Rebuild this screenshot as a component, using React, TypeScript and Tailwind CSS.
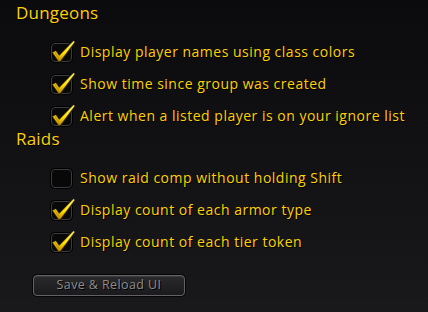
import React from "react";

const font = { fontFamily: '"Open Sans", "Noto Sans", sans-serif' };

function Check() {
  return (
    <svg
      className="absolute left-[-2px] top-[-5px] pointer-events-none"
      width="28"
      height="26"
      viewBox="-2 -5 28 26"
    >
      <defs>
        <linearGradient id="cg" x1="0" y1="0" x2="0" y2="1">
          <stop offset="0" stopColor="#fffa70" />
          <stop offset="0.6" stopColor="#ffe000" />
          <stop offset="1" stopColor="#b88400" />
        </linearGradient>
      </defs>
      <polygon
        points="0.5,8.6 3.8,6.8 7.2,11.6 21.6,-3.2 22.8,-2 8.2,17.4 6.6,17.4"
        fill="#1e1400"
        transform="translate(0.7,0.9)"
      />
      <polygon
        points="0.5,8.6 3.8,6.8 7.2,11.6 21.6,-3.2 22.8,-2 8.2,17.4 6.6,17.4"
        fill="url(#cg)"
        stroke="#3d2b00"
        strokeWidth="0.5"
      />
      <polygon points="1.8,8.7 3.6,7.8 7.2,13 6.9,15.4" fill="#c48c00" opacity="0.75" />
    </svg>
  );
}

function Row({ label, checked }: { label: string; checked: boolean }) {
  return (
    <div className="flex h-[26px] items-center">
      <div className="relative h-[19px] w-[21px] shrink-0 rounded-[4px] border border-[#3c3c3e] bg-[#080809] shadow-[0_0_0_1px_#000]">
        {checked && <Check />}
      </div>
      <span
        className="ml-[8px] whitespace-nowrap text-[14px] leading-[26px] tracking-[0.5px] text-[#ffd100] [text-shadow:1px_1px_0_#000]"
        style={font}
      >
        {label}
      </span>
    </div>
  );
}

function Heading({ children }: { children: React.ReactNode }) {
  return (
    <div
      className="h-[20px] pl-[16px] text-[17px] leading-[20px] tracking-[0.2px] text-[#ffd100] [text-shadow:1px_1px_0_#000]"
      style={font}
    >
      {children}
    </div>
  );
}

export default function App() {
  return (
    <div className="h-[312px] w-[428px] overflow-hidden bg-gradient-to-b from-[#0b0b0d] to-[#19191b] pt-[3px]">
      <Heading>Dungeons</Heading>
      <div className="mt-[16px] flex flex-col gap-[6px] pl-[51px]">
        <Row checked label="Display player names using class colors" />
        <Row checked label="Show time since group was created" />
        <Row checked label="Alert when a listed player is on your ignore list" />
      </div>
      <Heading>Raids</Heading>
      <div className="mt-[16px] flex flex-col gap-[6px] pl-[51px]">
        <Row checked={false} label="Show raid comp without holding Shift" />
        <Row checked label="Display count of each armor type" />
        <Row checked label="Display count of each tier token" />
      </div>
      <div className="mt-[20px] pl-[33px]">
        <button
          className="flex h-[21px] w-[152px] items-center justify-center rounded-[4px] border border-[#626264] bg-gradient-to-b from-[#2a2a2c] to-[#1a1a1c] text-[12.5px] tracking-[0.4px] text-[#8c8c8c] shadow-[0_0_0_1px_#050505,inset_0_1px_0_#3a3a3c] [text-shadow:1px_1px_0_#000]"
          style={font}
        >
          Save &amp; Reload UI
        </button>
      </div>
    </div>
  );
}
